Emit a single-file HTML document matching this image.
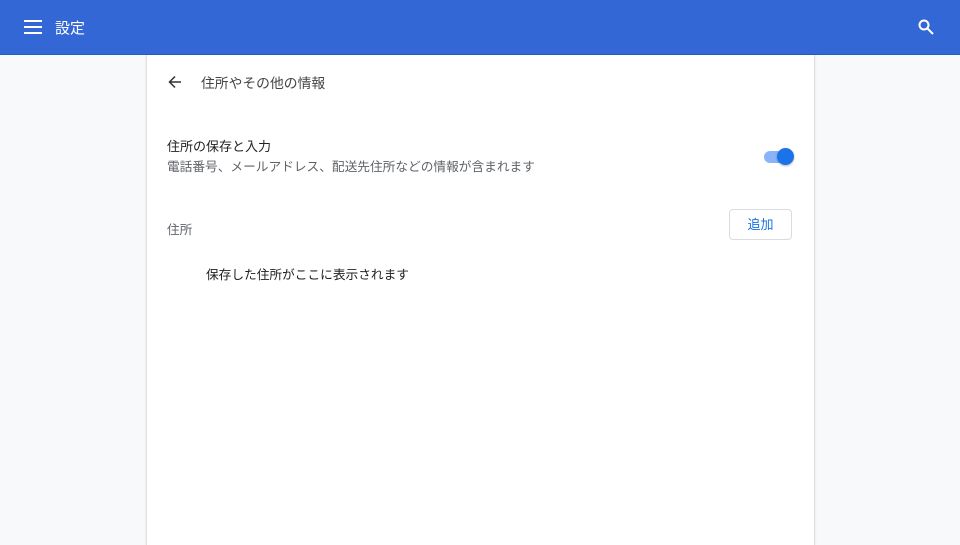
<!DOCTYPE html>
<html><head><meta charset="utf-8"><style>
body{margin:0;width:960px;height:540px;background:#f8f9fa;font-family:"Liberation Sans","Noto Sans CJK JP",sans-serif;overflow:hidden;position:relative}
.hdr{position:absolute;left:0;top:0;width:960px;height:54px;background:#3367d6;border-bottom:1px solid #2a5bc4}
.card{position:absolute;left:146px;top:55px;width:667px;height:490px;background:#fff;border-left:1px solid #e0e0e0;border-right:1px solid #e0e0e0;box-shadow:0 0 2px rgba(0,0,0,.1)}
.t{position:absolute;white-space:nowrap}
</style></head><body>
<div class="hdr">
<svg style="position:absolute;left:24px;top:20px" width="18" height="14"><rect y="0" width="18" height="2" fill="#fff"/><rect y="6" width="18" height="2" fill="#fff"/><rect y="12" width="18" height="2" fill="#fff"/></svg>
<div class="t" style="left:55px;top:17px;color:#fff;font-size:15px">設定</div>
<svg style="position:absolute;left:918px;top:19px" width="16" height="16" viewBox="0 0 16 16"><circle cx="6" cy="6" r="4.5" stroke="#fff" stroke-width="2" fill="none"/><path d="M9.5 9.5L15 15" stroke="#fff" stroke-width="2"/></svg>
</div>
<div class="card">
<svg style="position:absolute;left:21px;top:20px" width="14" height="14" viewBox="0 0 14 14"><path d="M13 7H2M7 1.5L1.5 7 7 12.5" stroke="#333" stroke-width="1.5" fill="none"/></svg>
<div class="t" style="left:54px;top:17px;font-size:13.8px;color:#444">住所やその他の情報</div>
<div class="t" style="left:20px;top:81px;font-size:13px;color:#202124">住所の保存と入力</div>
<div class="t" style="left:20px;top:101px;font-size:12.7px;color:#5f6368">電話番号、メールアドレス、配送先住所などの情報が含まれます</div>
<div style="position:absolute;left:617px;top:96px;width:28px;height:12px;border-radius:6px;background:#8ab4f8"></div>
<div style="position:absolute;left:630px;top:93px;width:17px;height:17px;border-radius:50%;background:#1a73e8;box-shadow:0 1px 2px rgba(0,0,0,.3)"></div>
<div class="t" style="left:20px;top:164px;font-size:12.7px;color:#5f6368">住所</div>
<div style="position:absolute;left:582px;top:154px;width:63px;height:31px;border:1px solid #dadce0;border-radius:4px;box-sizing:border-box;color:#1a73e8;font-size:13px;text-align:center;line-height:29px">追加</div>
<div class="t" style="left:59px;top:209px;font-size:12.7px;color:#202124">保存した住所がここに表示されます</div>
</div>
</body></html>
